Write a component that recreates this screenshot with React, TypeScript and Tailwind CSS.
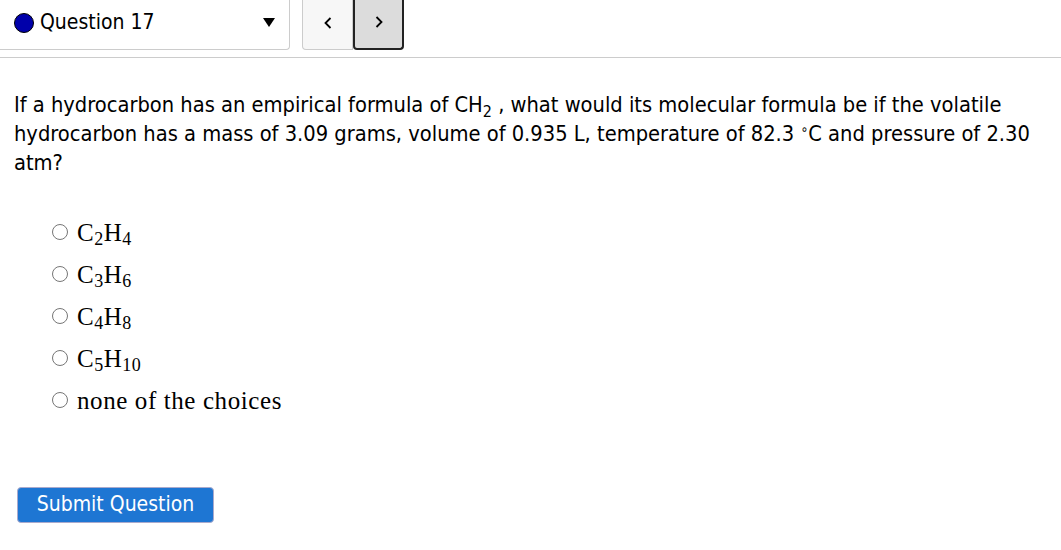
import React from "react";

const sans = { fontFamily: '"DejaVu Sans Condensed", "DejaVu Sans", sans-serif' };

function Formula({ c, h }: { c: string; h: string }) {
  return (
    <span className="font-['Liberation_Serif',serif] text-[25px] text-black leading-none tracking-[0.5px]">
      C<sub className="text-[18px] relative top-[4px] align-baseline">{c}</sub>H
      <sub className="text-[18px] relative top-[4px] align-baseline">{h}</sub>
    </span>
  );
}

export default function App() {
  const choices: React.ReactNode[] = [
    <Formula c="2" h="4" />,
    <Formula c="3" h="6" />,
    <Formula c="4" h="8" />,
    <Formula c="5" h="10" />,
    <span className="font-['Liberation_Serif',serif] text-[25px] text-black leading-none tracking-[0.6px]">none of the choices</span>,
  ];
  return (
    <div className="w-[1061px] h-[550px] bg-white text-[#222] overflow-hidden" style={sans}>
      <div className="flex items-start h-[50px]">
        <div className="ml-[-4px] w-[294px] h-[50px] border border-[#ccc] border-t-0 rounded-b-[4px] flex items-center pl-[17px] pr-[14px] pb-[4px]">
          <span className="w-[20px] h-[20px] rounded-full bg-[#0000aa] border border-black" />
          <span className="ml-[6px] text-[21px] text-black">Question 17</span>
          <svg className="ml-auto" width="12" height="9" viewBox="0 0 12 9"><path d="M0 0 L12 0 L6 9 Z" fill="#000" /></svg>
        </div>
        <div className="ml-[12px] flex h-[50px]">
          <button className="w-[51px] h-[50px] bg-[#f7f7f7] border border-[#ccc] border-t-0 rounded-bl-[4px] flex items-center justify-center pb-[4px]">
            <svg width="12" height="14" viewBox="0 0 12 14"><path d="M8.5 2 L3.5 7 L8.5 12" fill="none" stroke="#000" strokeWidth="1.8" /></svg>
          </button>
          <button className="w-[51px] h-[50px] bg-[#dcdcdc] border-2 border-[#222] border-t-0 rounded-b-[4px] flex items-center justify-center pb-[4px]">
            <svg width="12" height="14" viewBox="0 0 12 14"><path d="M3.5 2 L8.5 7 L3.5 12" fill="none" stroke="#000" strokeWidth="1.8" /></svg>
          </button>
        </div>
      </div>
      <div className="mt-[7px] h-px bg-[#ccc]" />
      <div className="pl-[14px] pt-[32px] text-[21.7px] leading-[29px] text-black">
        If a hydrocarbon has an empirical formula of CH<sub className="text-[16px] align-baseline relative top-[5px]">2</sub> , what would its molecular formula be if the volatile hydrocarbon has a mass of 3.09 grams, volume of 0.935 L, temperature of 82.3 <sup className="text-[14px] align-baseline relative top-[-7px]">∘</sup>C and pressure of 2.30 atm?
      </div>
      <div className="pl-[52px] pt-[44px] flex flex-col gap-[20px]">
        {choices.map((c, i) => (
          <label key={i} className="flex items-center gap-[9px] h-[22px]">
            <span className="w-[16px] h-[16px] rounded-full border border-[#767676] bg-white" />
            {c}
          </label>
        ))}
      </div>
      <div className="pl-[17px] pt-[76px]">
        <button className="w-[197px] h-[36px] bg-[#1e76d3] border border-[#aac] rounded-[4px] text-white text-[21px]">Submit Question</button>
      </div>
    </div>
  );
}
